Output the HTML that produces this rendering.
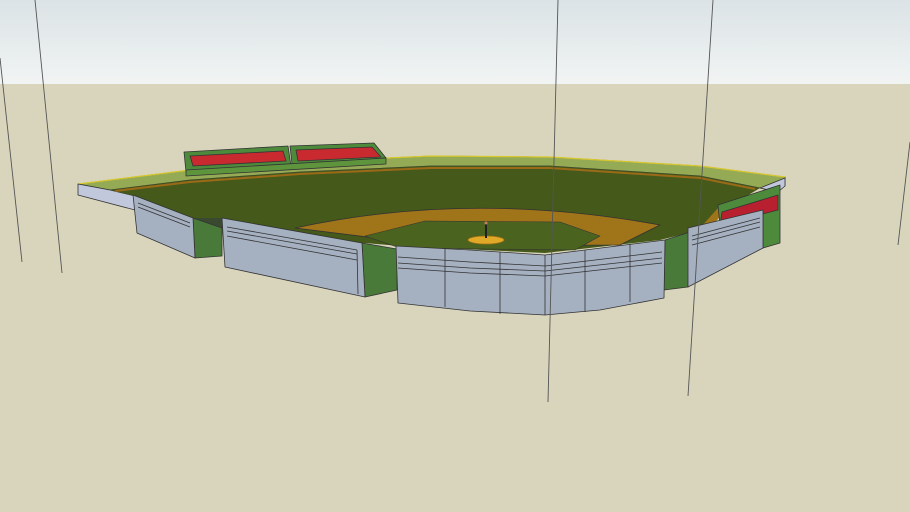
<!DOCTYPE html>
<html><head><meta charset="utf-8"><style>html,body{margin:0;padding:0;width:910px;height:512px;overflow:hidden}svg{display:block}</style></head>
<body>
<svg width="910" height="512" viewBox="0 0 910 512" xmlns="http://www.w3.org/2000/svg">
<defs>
<linearGradient id="sky" x1="0" y1="0" x2="0" y2="1">
<stop offset="0" stop-color="#dbe3e6"/><stop offset="1" stop-color="#f1f4f3"/>
</linearGradient>
</defs>
<rect width="910" height="84" fill="url(#sky)"/>
<rect y="84" width="910" height="428" fill="#d9d5bd"/>
<g stroke="#333" stroke-width="0.8" fill="none" stroke-linejoin="round">
<path d="M78,184 L190,170 L300,162 L430,156 L550,157 L700,166 L785,177 L785,186 L760,188 L700,176 L550,166 L430,166 L300,172 L190,180 L110,190 Z" fill="#95aa55"/>
<path d="M78,184 L190,170 L300,162 L430,156 L550,157 L700,166 L785,177" stroke="#d8c830" stroke-width="1.2"/>
<path d="M78,184 L110,190 L135,196 L135,210 L78,195 Z" fill="#c2c8dc"/>
<path d="M110,190 L190,180 L300,172 L430,166 L550,166 L700,176 L760,188 L720,212 L700,230 L660,240 L545,253 L400,246 L365,243 L362,243 L300,232 L222,220 L222,228 L193,224 L135,196 Z" fill="#44591a" stroke="none"/>
<path d="M193,218 L222,228 L362,250 L362,243 L222,218 Z" fill="#3a4a30" stroke="none"/>
<path d="M115,191 L190,182 L300,174 L430,168 L550,168 L700,178 L755,189" stroke="#9a6a18" stroke-width="2"/>
<path d="M295,228 Q470,190 660,225 L620,245 L440,246 Z" fill="#a07418"/>
<path d="M700,228 L718,208 L722,214 L705,235 Z" fill="#a07418" stroke="none"/>
<path d="M365,236 L425,221 L560,222 L600,236 L575,250 L400,248 Z" fill="#4a6420" stroke="#333" stroke-width="0.6"/>
<ellipse cx="486" cy="240" rx="18" ry="4" fill="#e0aa28" stroke="#a07010"/>
<line x1="486" y1="224" x2="486" y2="238" stroke="#222" stroke-width="2"/>
<circle cx="486" cy="223" r="1.5" fill="#c08060" stroke="none"/>
<path d="M760,188 L785,178 L785,186 L778,192 Z" fill="#c2c8dc"/>
<path d="M184,152 L288,146 L291,166 L186,172 Z" fill="#4e8a3c"/>
<path d="M190,156 L283,151 L286,161 L193,166 Z" fill="#c82a30"/>
<path d="M290,146 L374,143 L386,158 L292,164 Z" fill="#4e8a3c"/>
<path d="M296,150 L372,147 L381,157 L298,161 Z" fill="#c82a30"/>
<path d="M186,170 L386,158 L386,164 L186,176 Z" fill="#5e943c"/>
<path d="M718,205 L780,185 L780,243 L763,248 L763,210 L720,226 Z" fill="#4e8a3c"/>
<path d="M722,212 L778,195 L778,210 L720,225 Z" fill="#b82030"/>
<path d="M193,218 L222,228 L222,256 L195,258 Z" fill="#4a7a3a"/>
<path d="M362,243 L397,249 L397,290 L365,297 Z" fill="#4a7a3a"/>
<path d="M665,240 L690,232 L688,287 L664,290 Z" fill="#4a7a3a"/>
<path d="M133,195 L193,218 L195,258 L137,233 Z" fill="#a5b0c1"/>
<path d="M138,203 L190,223 M138,207 L190,227" />
<path d="M222,218 L362,243 L365,297 L225,267 Z" fill="#a5b0c1"/>
<path d="M227,227 L357,250 M227,231 L357,254 M227,236 L357,260 M357,250 L358,294"/>
<path d="M396,246 L470,250 L545,255 L665,240 L664,298 L600,310 L545,315 L470,311 L398,303 Z" fill="#a5b0c1"/>
<path d="M398,257 L470,262 L545,266 L662,252 M398,263 L470,268 L545,271 L662,258 M398,268 L470,273 L545,276 L662,263"/>
<path d="M445,248 L445,307 M500,252 L500,314 M545,255 L545,315 M585,250 L585,312 M630,244 L630,302"/>
<path d="M688,228 L763,210 L763,248 L688,287 Z" fill="#a5b0c1"/>
<path d="M692,236 L760,218 M692,240 L760,222 M692,245 L760,227"/>
</g>
<g stroke="#555" stroke-width="0.9">
<line x1="0" y1="58" x2="22" y2="262"/>
<line x1="35" y1="0" x2="62" y2="273"/>
<line x1="558" y1="0" x2="548" y2="402"/>
<line x1="713" y1="0" x2="688" y2="396"/>
<line x1="910" y1="142" x2="898" y2="245"/>
</g>
</svg>
</body></html>
